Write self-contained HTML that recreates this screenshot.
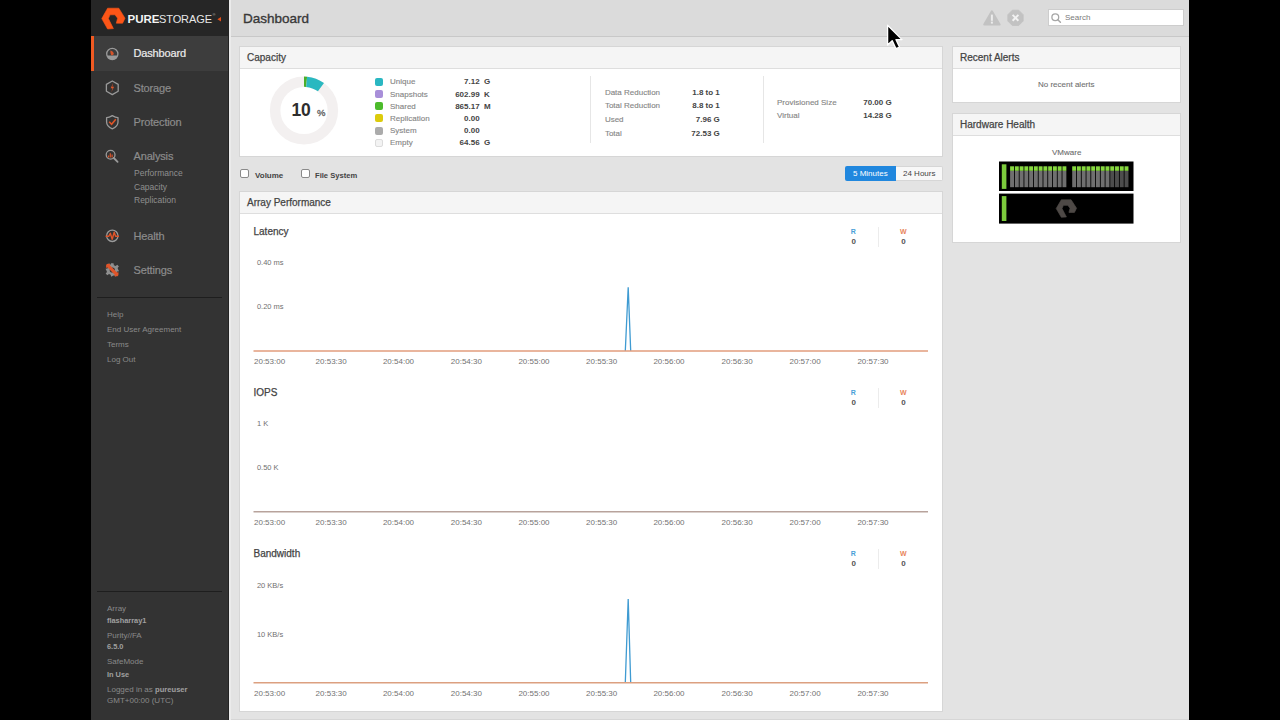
<!DOCTYPE html>
<html><head><meta charset="utf-8">
<style>
*{box-sizing:border-box;margin:0;padding:0}
html,body{width:1280px;height:720px;overflow:hidden;background:#000;font-family:"Liberation Sans",sans-serif}
.abs{position:absolute}
#side{position:absolute;left:91px;top:0;width:138px;height:720px;background:#333333}
#logo{position:absolute;left:0;top:0;width:138px;height:36px;background:#262626}
#main{position:absolute;left:229px;top:0;width:960px;height:720px;background:#e3e3e3}
#hdr{position:absolute;left:0;top:0;width:960px;height:37px;background:#dbdbdb;border-bottom:1px solid #c8c8c8}
.t{position:absolute;white-space:nowrap;line-height:1}
.panel{position:absolute;background:#fff;border:1px solid #d6d6d6}
.ph{position:absolute;left:0;top:0;right:0;height:22px;background:#f5f5f5;border-bottom:1px solid #dedede}
.ptitle{position:absolute;left:7px;top:6px;font-size:10px;color:#444;-webkit-text-stroke:0.25px #444;white-space:nowrap;line-height:1}
.nav{position:absolute;left:0;width:138px;height:35px}
.navt{position:absolute;left:42.5px;font-size:11px;letter-spacing:-0.15px;color:#8c8c8c;-webkit-text-stroke:0.2px currentColor;white-space:nowrap;line-height:1}
.sub{position:absolute;left:43px;font-size:8.5px;color:#8f8f8f;white-space:nowrap;line-height:1}
.lg{font-size:8px;color:#858585;-webkit-text-stroke:0.12px #858585}
.val{font-size:8px;font-weight:700;color:#444}
.ctitle{font-size:10px;color:#444;-webkit-text-stroke:0.25px #444}
.ylab{font-size:7.5px;color:#707070}
.xlab{font-size:8px;color:#727272}
.rw{font-size:7px;font-weight:700}
.rw0{font-size:8px;font-weight:700;color:#555}
.lnk{position:absolute;left:16px;font-size:8px;color:#8a8a8a;white-space:nowrap;line-height:1}
</style></head><body>

<div id="side">
  <div class="abs" style="left:137px;top:0;width:1px;height:720px;background:#232323;z-index:5"></div>
  <div id="logo">
    <svg class="abs" style="left:0;top:0" width="138" height="36" viewBox="91 0 138 36">
      <path d="M107.6,8.2 L118.8,8.2 L125,18.2 L122.6,23.2 L116.3,23.2 L117.6,18.2 L115,14.8 L110,14.8 L108.4,18.6 L113.4,28.6 L107.6,29 L101.75,18.6 Z" fill="#fc5517" stroke="#fc5517" stroke-width="0.6" stroke-linejoin="round"/>
      <path d="M221,16.9 L221,21.6 L217.4,19.25 Z" fill="#e0501a"/>
    </svg>
    <div class="t" style="left:36.5px;top:13.5px;font-size:11.5px;font-weight:700;color:#f4f4f4">PURE</div>
    <div class="t" style="left:68px;top:13.5px;font-size:11px;color:#e8e8e8;letter-spacing:-0.1px">STORAGE</div>
    <div class="t" style="left:121.5px;top:13px;font-size:4px;color:#bbb">&#174;</div>
  </div>

  <!-- active -->
  <div class="nav" style="top:36px;background:#3d3d3d"><div class="abs" style="left:0;top:0;width:3px;height:35px;background:#f05a22"></div>
    <div class="navt" style="top:12.2px;color:#ececec">Dashboard</div></div>
  <div class="nav" style="top:71px"><div class="navt" style="top:11.7px">Storage</div></div>
  <div class="nav" style="top:105px"><div class="navt" style="top:11.7px">Protection</div></div>
  <div class="nav" style="top:139px"><div class="navt" style="top:11.7px">Analysis</div></div>
  <div class="sub" style="top:168.6px">Performance</div>
  <div class="sub" style="top:183.2px">Capacity</div>
  <div class="sub" style="top:196.3px">Replication</div>
  <div class="nav" style="top:219px"><div class="navt" style="top:11.7px">Health</div></div>
  <div class="nav" style="top:253px"><div class="navt" style="top:11.7px">Settings</div></div>
  <div class="abs" style="left:6px;top:297px;width:125px;height:1px;background:#1e1e1e"></div>
  <div class="lnk" style="top:310.6px">Help</div>
  <div class="lnk" style="top:325.8px">End User Agreement</div>
  <div class="lnk" style="top:340.6px">Terms</div>
  <div class="lnk" style="top:355.8px">Log Out</div>
  <div class="abs" style="left:6px;top:591px;width:125px;height:1px;background:#1e1e1e"></div>
  <div class="lnk" style="top:604.6px">Array</div>
  <div class="lnk" style="top:616.8px;font-weight:700;font-size:7.4px;color:#a0a0a0">flasharray1</div>
  <div class="lnk" style="top:631.6px">Purity//FA</div>
  <div class="lnk" style="top:643px;font-weight:700;font-size:7.4px;color:#a0a0a0">6.5.0</div>
  <div class="lnk" style="top:658px">SafeMode</div>
  <div class="lnk" style="top:670.6px;font-weight:700;font-size:7.4px;color:#a0a0a0">In Use</div>
  <div class="lnk" style="top:685.6px">Logged in as <b style="color:#a0a0a0;font-size:7.6px">pureuser</b></div>
  <div class="lnk" style="top:696.8px">GMT+00:00 (UTC)</div>
<svg class="abs" style="left:0;top:0;pointer-events:none" width="138" height="300" viewBox="91 0 138 300">
  <g fill="none" stroke="#9a9a9a" stroke-width="1.3">
    <circle cx="112.3" cy="54" r="5.6"/>
    <path d="M112.3,81 L118.2,84.4 L118.2,91.2 L112.3,94.6 L106.4,91.2 L106.4,84.4 Z" stroke-linejoin="round"/>
    <path d="M112.3,115.6 Q115.5,117.6 118,117.6 L118,122 Q118,126.5 112.3,128.8 Q106.6,126.5 106.6,122 L106.6,117.6 Q109.1,117.6 112.3,115.6 Z" stroke-linejoin="round"/>
    <circle cx="110.6" cy="154.8" r="4.4"/>
    <path d="M113.8,158 L117.6,161.8" stroke-width="1.8" stroke-linecap="round"/>
    <circle cx="112.3" cy="235.8" r="5.7"/>
  </g>
  <path d="M106.9,55.6 A5.6,5.6 0 0 0 117.7,55.6 Z" fill="#9a9a9a"/>
  <path d="M110.4,50.6 Q113.5,51.2 113.8,54 Q112.8,55.6 111.3,55.2 Q110,53.5 110.4,50.6 Z" fill="#d5542a"/>
  <path d="M113.2,82.8 L110.7,88.2 L112.6,88.2 L111.2,92.6 L114.1,86.8 L112.2,86.8 Z" fill="#e0552a"/>
  <path d="M109.2,121.8 L111.6,124.2 L115.8,119.2" fill="none" stroke="#de5528" stroke-width="1.6"/>
  <path d="M108.5,157.5 L108.5,155.5 M110.3,157.5 L110.3,153.3 M112.1,157.5 L112.1,154.5" stroke="#d8542a" stroke-width="1.2"/>
  <path d="M105.6,236.2 L108.8,236.2 L110.3,233.2 L112.2,239.2 L114.2,232.2 L115.6,236.2 L119,236.2" fill="none" stroke="#e0552a" stroke-width="1.4" stroke-linejoin="round"/>
  <g transform="translate(112.3,270)">
    <path d="M-1.2,-6.8 L1.2,-6.8 L1.6,-4.8 L3.3,-4.0 L5.0,-5.3 L6.6,-3.6 L5.3,-1.9 L6.0,-0.2 L6.8,1.2 L6.8,1.2 L4.8,1.6 L4.0,3.3 L5.3,5.0 L3.6,6.6 L1.9,5.3 L0.2,6.0 L-1.2,6.8 L-1.6,4.8 L-3.3,4.0 L-5.0,5.3 L-6.6,3.6 L-5.3,1.9 L-6.0,0.2 L-6.8,-1.2 L-4.8,-1.6 L-4.0,-3.3 L-5.3,-5.0 L-3.6,-6.6 L-1.9,-5.3 Z" fill="#8f8f8f"/>
    <circle r="2.6" fill="#333"/>
    <path d="M-4.6,-4.6 L4.6,4.6" stroke="#e0552a" stroke-width="3.2" stroke-linecap="round"/>
    <path d="M-5.6,-3 L-3,-5.6 M3,5.6 L5.6,3" stroke="#e0552a" stroke-width="1.6" stroke-linecap="round"/>
  </g>
</svg>
</div>

<div id="main">
  
  <div class="abs" style="left:0;top:719px;width:960px;height:1px;background:#d6d6d6"></div>
  <div id="hdr">
    <div class="t" style="left:14px;top:12px;font-size:13.5px;color:#383838;-webkit-text-stroke:0.35px #383838">Dashboard</div>
    <svg class="abs" style="left:0;top:0" width="960" height="36" viewBox="0 0 960 36">
      <path d="M762.9,11.3 L770.6,24.6 L755.2,24.6 Z" fill="#c2c2c2" stroke="#c2c2c2" stroke-width="2" stroke-linejoin="round"/>
      <rect x="761.9" y="14.6" width="2" height="6.2" fill="#ececec"/><rect x="761.9" y="21.6" width="2" height="2" fill="#ececec"/>
      <polygon points="794.17,21.03 789.68,25.52 783.32,25.52 778.83,21.03 778.83,14.67 783.32,10.18 789.68,10.18 794.17,14.67" fill="#c2c2c2" stroke="#c2c2c2" stroke-width="0.8" stroke-linejoin="round"/>
      <path d="M783.60,14.95 L789.40,20.75 M789.40,14.95 L783.60,20.75" stroke="#f2f2f2" stroke-width="1.9"/>
    </svg>
    <div class="abs" style="left:818.5px;top:9px;width:136.5px;height:17.2px;background:#fff;border:1px solid #cdcdcd"></div>
    <svg class="abs" style="left:0;top:0" width="960" height="36" viewBox="0 0 960 36">
      <circle cx="826.3" cy="17.2" r="3.4" fill="none" stroke="#a6a6a6" stroke-width="1.3"/>
      <path d="M828.8,19.7 L831.4,22.3" stroke="#a6a6a6" stroke-width="1.5" stroke-linecap="round"/>
    </svg>
    <div class="t" style="left:836px;top:14px;font-size:8px;color:#7a7a7a">Search</div>
  </div>

  <div class="abs" style="left:0;top:0;width:2px;height:720px;background:#ebebeb"></div>
  <!-- Capacity panel -->
  <div class="panel" style="left:10px;top:46px;width:704px;height:111px">
    <div class="ph"><div class="ptitle">Capacity</div></div>
    <svg class="abs" style="left:0;top:0.5px" width="140" height="110" viewBox="0 0 140 110">
      <circle cx="64" cy="62.5" r="28.85" fill="none" stroke="#f3f0f0" stroke-width="10.5"/>
      <path d="M64.00,28.50 A34,34 0 0 1 67.08,28.64 L66.15,38.90 A23.7,23.7 0 0 0 64.00,38.80 Z" fill="#4aae2a"/>
      <path d="M67.08,28.64 A34,34 0 0 1 83.98,34.99 L77.93,43.33 A23.7,23.7 0 0 0 66.15,38.90 Z" fill="#2ab8c0"/>
    </svg>
    <div class="t" style="left:51.5px;top:54.9px;font-size:17.5px;font-weight:700;color:#2e2e2e;letter-spacing:-0.3px">10</div>
    <div class="t" style="left:77px;top:61.2px;font-size:9.5px;color:#5a5a5a;-webkit-text-stroke:0.3px #5a5a5a">%</div>
<div class="abs" style="left:135px;top:30.7px;width:8px;height:8px;border-radius:2px;background:#2ab7c2;"></div>
    <div class="t lg" style="left:150px;top:31.3px">Unique</div>
    <div class="t val" style="right:462.4px;top:31.3px">7.12</div>
    <div class="t val" style="left:244px;top:31.3px">G</div>
    <div class="abs" style="left:135px;top:42.9px;width:8px;height:8px;border-radius:2px;background:#a88fd9;"></div>
    <div class="t lg" style="left:150px;top:43.5px">Snapshots</div>
    <div class="t val" style="right:462.4px;top:43.5px">602.99</div>
    <div class="t val" style="left:244px;top:43.5px">K</div>
    <div class="abs" style="left:135px;top:55.1px;width:8px;height:8px;border-radius:2px;background:#4cbb2b;"></div>
    <div class="t lg" style="left:150px;top:55.7px">Shared</div>
    <div class="t val" style="right:462.4px;top:55.7px">865.17</div>
    <div class="t val" style="left:244px;top:55.7px">M</div>
    <div class="abs" style="left:135px;top:67.3px;width:8px;height:8px;border-radius:2px;background:#dccb0c;"></div>
    <div class="t lg" style="left:150px;top:67.9px">Replication</div>
    <div class="t val" style="right:462.4px;top:67.9px">0.00</div>
    <div class="abs" style="left:135px;top:79.6px;width:8px;height:8px;border-radius:2px;background:#ababab;"></div>
    <div class="t lg" style="left:150px;top:80.2px">System</div>
    <div class="t val" style="right:462.4px;top:80.2px">0.00</div>
    <div class="abs" style="left:135px;top:91.8px;width:8px;height:8px;border-radius:2px;background:#f3f3f3;border:1px solid #dcdcdc;"></div>
    <div class="t lg" style="left:150px;top:92.4px">Empty</div>
    <div class="t val" style="right:462.4px;top:92.4px">64.56</div>
    <div class="t val" style="left:244px;top:92.4px">G</div>
    <div class="t lg" style="left:364.9px;top:42.0px">Data Reduction</div>
    <div class="t val" style="right:222.2px;top:42.0px">1.8 to 1</div>
    <div class="t lg" style="left:364.9px;top:55.3px">Total Reduction</div>
    <div class="t val" style="right:222.2px;top:55.3px">8.8 to 1</div>
    <div class="t lg" style="left:364.9px;top:68.9px">Used</div>
    <div class="t val" style="right:222.2px;top:68.9px">7.96 G</div>
    <div class="t lg" style="left:364.9px;top:82.6px">Total</div>
    <div class="t val" style="right:222.2px;top:82.6px">72.53 G</div>
    <div class="t lg" style="left:537.0px;top:51.7px">Provisioned Size</div>
    <div class="t val" style="right:50.3px;top:51.7px">70.00 G</div>
    <div class="t lg" style="left:537.0px;top:65.3px">Virtual</div>
    <div class="t val" style="right:50.3px;top:65.3px">14.28 G</div>
    <div class="abs" style="left:350px;top:29px;width:1px;height:67px;background:#e6e6e6"></div>
    <div class="abs" style="left:523px;top:29px;width:1px;height:67px;background:#e6e6e6"></div>
  </div>

  <!-- Recent alerts -->
  <div class="panel" style="left:723px;top:46px;width:229px;height:57px">
    <div class="ph"><div class="ptitle">Recent Alerts</div></div>
    <div class="t" style="left:85px;top:34px;font-size:8px;color:#707070;-webkit-text-stroke:0.1px #707070">No recent alerts</div>
  </div>

  <!-- Hardware health -->
  <div class="panel" style="left:723px;top:113px;width:229px;height:130px">
    <div class="ph"><div class="ptitle">Hardware Health</div></div>
    <div class="t" style="left:99px;top:35px;font-size:8px;color:#6c6c6c;-webkit-text-stroke:0.1px #6c6c6c">VMware</div>
    <svg class="abs" style="left:0;top:0" width="227" height="128" viewBox="953 114 227 128">
    <rect x="999" y="161.5" width="134.5" height="29.5" fill="#000"/>
    <rect x="999" y="193.6" width="134.5" height="30" fill="#000"/>
    <rect x="1001.8" y="164.3" width="4.6" height="24.6" fill="#7ccb3c"/>
    <rect x="1001.8" y="196.1" width="4.6" height="24.9" fill="#7ccb3c"/>
    <rect x="1010.10" y="170.8" width="3.9" height="16.4" fill="#6f6f6f"/>
    <rect x="1010.10" y="166.3" width="3.9" height="4.5" fill="#86d83e"/>
    <rect x="1014.86" y="170.8" width="3.9" height="16.4" fill="#6f6f6f"/>
    <rect x="1014.86" y="166.3" width="3.9" height="4.5" fill="#86d83e"/>
    <rect x="1019.62" y="170.8" width="3.9" height="16.4" fill="#6f6f6f"/>
    <rect x="1019.62" y="166.3" width="3.9" height="4.5" fill="#86d83e"/>
    <rect x="1024.38" y="170.8" width="3.9" height="16.4" fill="#6f6f6f"/>
    <rect x="1024.38" y="166.3" width="3.9" height="4.5" fill="#86d83e"/>
    <rect x="1029.14" y="170.8" width="3.9" height="16.4" fill="#6f6f6f"/>
    <rect x="1029.14" y="166.3" width="3.9" height="4.5" fill="#86d83e"/>
    <rect x="1033.90" y="170.8" width="3.9" height="16.4" fill="#6f6f6f"/>
    <rect x="1033.90" y="166.3" width="3.9" height="4.5" fill="#86d83e"/>
    <rect x="1038.66" y="170.8" width="3.9" height="16.4" fill="#6f6f6f"/>
    <rect x="1038.66" y="166.3" width="3.9" height="4.5" fill="#86d83e"/>
    <rect x="1043.42" y="170.8" width="3.9" height="16.4" fill="#6f6f6f"/>
    <rect x="1043.42" y="166.3" width="3.9" height="4.5" fill="#86d83e"/>
    <rect x="1048.18" y="170.8" width="3.9" height="16.4" fill="#6f6f6f"/>
    <rect x="1048.18" y="166.3" width="3.9" height="4.5" fill="#86d83e"/>
    <rect x="1052.94" y="170.8" width="3.9" height="16.4" fill="#6f6f6f"/>
    <rect x="1052.94" y="166.3" width="3.9" height="4.5" fill="#86d83e"/>
    <rect x="1057.70" y="170.8" width="3.9" height="16.4" fill="#6f6f6f"/>
    <rect x="1057.70" y="166.3" width="3.9" height="4.5" fill="#86d83e"/>
    <rect x="1062.46" y="170.8" width="3.9" height="16.4" fill="#6f6f6f"/>
    <rect x="1062.46" y="166.3" width="3.9" height="4.5" fill="#86d83e"/>
    <rect x="1072.20" y="170.8" width="3.9" height="16.4" fill="#6f6f6f"/>
    <rect x="1072.20" y="166.3" width="3.9" height="4.5" fill="#86d83e"/>
    <rect x="1076.96" y="170.8" width="3.9" height="16.4" fill="#6f6f6f"/>
    <rect x="1076.96" y="166.3" width="3.9" height="4.5" fill="#86d83e"/>
    <rect x="1081.72" y="170.8" width="3.9" height="16.4" fill="#6f6f6f"/>
    <rect x="1081.72" y="166.3" width="3.9" height="4.5" fill="#86d83e"/>
    <rect x="1086.48" y="170.8" width="3.9" height="16.4" fill="#6f6f6f"/>
    <rect x="1086.48" y="166.3" width="3.9" height="4.5" fill="#86d83e"/>
    <rect x="1091.24" y="170.8" width="3.9" height="16.4" fill="#6f6f6f"/>
    <rect x="1091.24" y="166.3" width="3.9" height="4.5" fill="#86d83e"/>
    <rect x="1096.00" y="170.8" width="3.9" height="16.4" fill="#6f6f6f"/>
    <rect x="1096.00" y="166.3" width="3.9" height="4.5" fill="#86d83e"/>
    <rect x="1100.76" y="170.8" width="3.9" height="16.4" fill="#6f6f6f"/>
    <rect x="1100.76" y="166.3" width="3.9" height="4.5" fill="#86d83e"/>
    <rect x="1105.52" y="170.8" width="3.9" height="16.4" fill="#6f6f6f"/>
    <rect x="1105.52" y="166.3" width="3.9" height="4.5" fill="#86d83e"/>
    <rect x="1110.28" y="170.8" width="3.9" height="16.4" fill="#4d4d4d"/>
    <rect x="1110.28" y="166.3" width="3.9" height="4.5" fill="#86d83e"/>
    <rect x="1115.04" y="170.8" width="3.9" height="16.4" fill="#4d4d4d"/>
    <rect x="1115.04" y="166.3" width="3.9" height="4.5" fill="#86d83e"/>
    <rect x="1119.80" y="170.8" width="3.9" height="16.4" fill="#4d4d4d"/>
    <rect x="1119.80" y="166.3" width="3.9" height="4.5" fill="#86d83e"/>
    <rect x="1124.56" y="170.8" width="3.9" height="16.4" fill="#4d4d4d"/>
    <rect x="1124.56" y="166.3" width="3.9" height="4.5" fill="#86d83e"/>
    <g transform="translate(1056.2,199.8) scale(0.875,0.84) translate(-101.75,-8.2)"><path d="M107.6,8.2 L118.8,8.2 L125,18.2 L122.6,23.2 L116.3,23.2 L117.6,18.2 L115,14.8 L110,14.8 L108.4,18.6 L113.4,28.6 L107.6,29 L101.75,18.6 Z" fill="#4e4946" stroke="#4e4946" stroke-width="0.8" stroke-linejoin="round"/></g>
    </svg>
  </div>

  <!-- checkboxes -->
  <div class="abs" style="left:11px;top:169px;width:9px;height:9px;background:#fff;border:1px solid #8a8a8a;border-radius:2px"></div>
  <div class="t" style="left:26px;top:172px;font-size:8px;font-weight:700;color:#444">Volume</div>
  <div class="abs" style="left:72px;top:169px;width:9px;height:9px;background:#fff;border:1px solid #8a8a8a;border-radius:2px"></div>
  <div class="t" style="left:86px;top:172px;font-size:7.6px;font-weight:700;color:#444">File System</div>
  <div class="abs" style="left:616px;top:166px;width:51px;height:15px;background:#2087de;border-radius:2px 0 0 2px"></div>
  <div class="t" style="left:624px;top:170px;font-size:8px;color:#fff">5 Minutes</div>
  <div class="abs" style="left:667px;top:166px;width:47px;height:15px;background:#f8f8f8;border:1px solid #d6d6d6;border-left:none;border-radius:0 2px 2px 0"></div>
  <div class="t" style="left:674px;top:170px;font-size:8px;color:#444">24 Hours</div>

  <!-- Array performance -->
  <div class="panel" style="left:10px;top:191px;width:704px;height:521px">
    <div class="ph"><div class="ptitle">Array Performance</div></div>
    <div class="t ctitle" style="left:13.5px;top:34.5px">Latency</div>
    <div class="t ylab" style="left:16.9px;top:66.8px">0.40 ms</div>
    <div class="t ylab" style="left:16.9px;top:111.2px">0.20 ms</div>
    <div class="t xlab" style="left:14.0px;top:165.9px">20:53:00</div>
    <div class="t xlab" style="left:75.6px;top:165.9px">20:53:30</div>
    <div class="t xlab" style="left:142.9px;top:165.9px">20:54:00</div>
    <div class="t xlab" style="left:210.8px;top:165.9px">20:54:30</div>
    <div class="t xlab" style="left:278.4px;top:165.9px">20:55:00</div>
    <div class="t xlab" style="left:346.1px;top:165.9px">20:55:30</div>
    <div class="t xlab" style="left:413.4px;top:165.9px">20:56:00</div>
    <div class="t xlab" style="left:481.6px;top:165.9px">20:56:30</div>
    <div class="t xlab" style="left:549.5px;top:165.9px">20:57:00</div>
    <div class="t xlab" style="left:617.4px;top:165.9px">20:57:30</div>
    <div class="t rw" style="left:610.8px;top:35.9px;color:#4aa0d8">R</div>
    <div class="t rw0" style="left:611.4px;top:46.1px">0</div>
    <div class="abs" style="left:637.6px;top:34.7px;width:1px;height:20px;background:#ececec"></div>
    <div class="t rw" style="left:660.0px;top:35.9px;color:#e8845a">W</div>
    <div class="t rw0" style="left:661.2px;top:46.1px">0</div>
    <svg class="abs" style="left:0;top:0" width="702" height="518" viewBox="240 192 702 518"><path d="M625.3,351.0 L628.2,287.2 L630.7,351.0" fill="none" stroke="#3f9bd2" stroke-width="1.3" stroke-linejoin="miter"/><line x1="253.5" y1="351.0" x2="928" y2="351.0" stroke="#e29c7c" stroke-width="1.6"/></svg>
    <div class="t ctitle" style="left:13.5px;top:195.5px">IOPS</div>
    <div class="t ylab" style="left:16.9px;top:227.7px">1 K</div>
    <div class="t ylab" style="left:16.9px;top:272.2px">0.50 K</div>
    <div class="t xlab" style="left:14.0px;top:326.9px">20:53:00</div>
    <div class="t xlab" style="left:75.6px;top:326.9px">20:53:30</div>
    <div class="t xlab" style="left:142.9px;top:326.9px">20:54:00</div>
    <div class="t xlab" style="left:210.8px;top:326.9px">20:54:30</div>
    <div class="t xlab" style="left:278.4px;top:326.9px">20:55:00</div>
    <div class="t xlab" style="left:346.1px;top:326.9px">20:55:30</div>
    <div class="t xlab" style="left:413.4px;top:326.9px">20:56:00</div>
    <div class="t xlab" style="left:481.6px;top:326.9px">20:56:30</div>
    <div class="t xlab" style="left:549.5px;top:326.9px">20:57:00</div>
    <div class="t xlab" style="left:617.4px;top:326.9px">20:57:30</div>
    <div class="t rw" style="left:610.8px;top:196.9px;color:#4aa0d8">R</div>
    <div class="t rw0" style="left:611.4px;top:207.1px">0</div>
    <div class="abs" style="left:637.6px;top:195.7px;width:1px;height:20px;background:#ececec"></div>
    <div class="t rw" style="left:660.0px;top:196.9px;color:#e8845a">W</div>
    <div class="t rw0" style="left:661.2px;top:207.1px">0</div>
    <svg class="abs" style="left:0;top:0" width="702" height="518" viewBox="240 192 702 518"><line x1="253.5" y1="511.8" x2="928" y2="511.8" stroke="#b8a39c" stroke-width="1.6"/></svg>
    <div class="t ctitle" style="left:13.5px;top:356.5px">Bandwidth</div>
    <div class="t ylab" style="left:16.9px;top:390.0px">20 KB/s</div>
    <div class="t ylab" style="left:16.9px;top:438.8px">10 KB/s</div>
    <div class="t xlab" style="left:14.0px;top:498.3px">20:53:00</div>
    <div class="t xlab" style="left:75.6px;top:498.3px">20:53:30</div>
    <div class="t xlab" style="left:142.9px;top:498.3px">20:54:00</div>
    <div class="t xlab" style="left:210.8px;top:498.3px">20:54:30</div>
    <div class="t xlab" style="left:278.4px;top:498.3px">20:55:00</div>
    <div class="t xlab" style="left:346.1px;top:498.3px">20:55:30</div>
    <div class="t xlab" style="left:413.4px;top:498.3px">20:56:00</div>
    <div class="t xlab" style="left:481.6px;top:498.3px">20:56:30</div>
    <div class="t xlab" style="left:549.5px;top:498.3px">20:57:00</div>
    <div class="t xlab" style="left:617.4px;top:498.3px">20:57:30</div>
    <div class="t rw" style="left:610.8px;top:357.9px;color:#4aa0d8">R</div>
    <div class="t rw0" style="left:611.4px;top:368.1px">0</div>
    <div class="abs" style="left:637.6px;top:356.7px;width:1px;height:20px;background:#ececec"></div>
    <div class="t rw" style="left:660.0px;top:357.9px;color:#e8845a">W</div>
    <div class="t rw0" style="left:661.2px;top:368.1px">0</div>
    <svg class="abs" style="left:0;top:0" width="702" height="518" viewBox="240 192 702 518"><path d="M625.3,682.7 L628.2,599 L630.7,682.7" fill="none" stroke="#3f9bd2" stroke-width="1.3" stroke-linejoin="miter"/><line x1="253.5" y1="682.7" x2="928" y2="682.7" stroke="#dca080" stroke-width="1.6"/></svg>
  </div>
</div>

<svg class="abs" style="left:884px;top:22px" width="26" height="32" viewBox="884 22 26 32">
  <path d="M887.6,25.2 L887.6,45.0 L892.2,40.6 L896.0,48.7 L899.6,47.2 L896.0,39.6 L902.0,39.6 Z" fill="#000" stroke="#fff" stroke-width="1.3" stroke-linejoin="round"/>
</svg>
</body></html>
